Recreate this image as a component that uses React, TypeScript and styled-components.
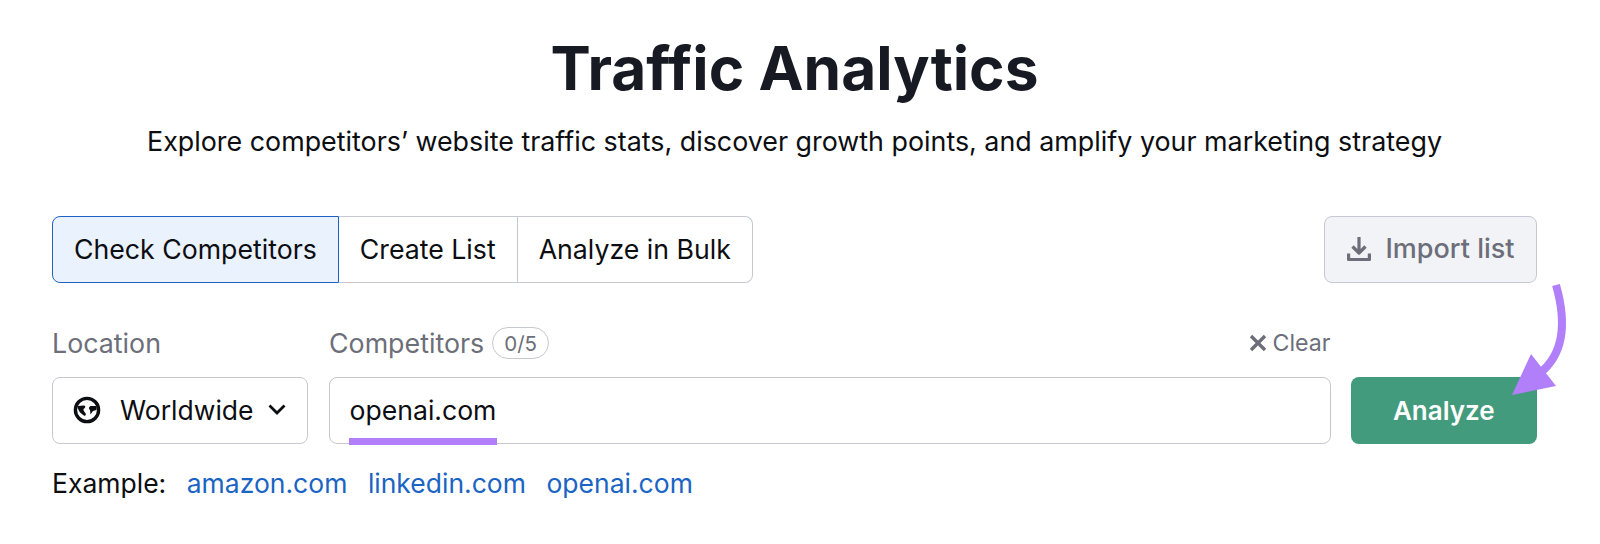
import styled, { createGlobalStyle } from "styled-components";

const GlobalStyle = createGlobalStyle`
  html, body {
    margin: 0;
    padding: 0;
    background: #fff;
  }
  body {
    font-family: Inter, "Liberation Sans", sans-serif;
  }
`;

const Page = styled.div`
  position: relative;
  width: 1600px;
  height: 544px;
  box-sizing: border-box;
  padding: 0 63px 0 52px;
  overflow: hidden;
  display: flex;
  flex-direction: column;
  align-items: center;
`;

const Title = styled.h1`
  margin: 32px 0 0;
  font-size: 60.4px;
  line-height: 72px;
  font-weight: 700;
  color: #171a22;
`;

const Subtitle = styled.p`
  margin: 20px 0 0;
  font-size: 26.85px;
  line-height: 34px;
  font-weight: 400;
  color: #0c0e12;
  white-space: nowrap;
`;

const Panel = styled.div`
  width: 100%;
  margin-top: 58px;
  display: flex;
  flex-direction: column;
`;

const TopRow = styled.div`
  display: flex;
  justify-content: space-between;
`;

const Tabs = styled.div`
  display: flex;
`;

const Tab = styled.div<{ $active?: boolean; $pos: "first" | "mid" | "last" }>`
  height: 67px;
  box-sizing: border-box;
  display: flex;
  align-items: center;
  padding: 0 21px 2px;
  font-size: 26.7px;
  color: #0c0e12;
  border: 1.5px solid ${(p) => (p.$active ? "#1e63c4" : "#c6c8d2")};
  border-left-width: ${(p) => (p.$pos === "first" ? "1.5px" : "0")};
  background: ${(p) => (p.$active ? "#eaf2fe" : "#fff")};
  border-radius: ${(p) =>
    p.$pos === "first" ? "8px 0 0 8px" : p.$pos === "last" ? "0 8px 8px 0" : "0"};
`;

const ImportButton = styled.div`
  width: 213.5px;
  height: 67px;
  box-sizing: border-box;
  padding: 0 0 2px 22px;
  display: flex;
  align-items: center;
  gap: 15px;
  border: 1.5px solid #c6c8d2;
  border-radius: 8px;
  background: #f2f3f6;
  color: #6c6e79;
  font-size: 27px;
  font-weight: 500;
`;

const FieldsRow = styled.div`
  margin-top: 43px;
  display: flex;
  align-items: flex-end;
`;

const Field = styled.div<{ $grow?: boolean }>`
  display: flex;
  flex-direction: column;
  gap: 18px;
  ${(p) => (p.$grow ? "flex: 1; margin-right: 20px;" : "width: 256px; margin-right: 21px;")}
`;

const LabelRow = styled.div`
  height: 33px;
  display: flex;
  align-items: center;
  gap: 8px;
  color: #6c6e79;
  font-size: 26.8px;
`;

const Counter = styled.span`
  height: 32px;
  margin-top: 1px;
  box-sizing: border-box;
  padding: 0 11px;
  display: flex;
  align-items: center;
  border: 1.5px solid #c6c8d2;
  border-radius: 17px;
  font-size: 20.5px;
`;

const ClearLink = styled.span`
  margin-left: auto;
  display: flex;
  align-items: center;
  gap: 5px;
  font-size: 23.2px;
`;

const Select = styled.div`
  height: 67px;
  box-sizing: border-box;
  padding: 0 20px 2px;
  display: flex;
  align-items: center;
  border: 1.5px solid #c6c8d2;
  border-radius: 8px;
  font-size: 26.5px;
  color: #0c0e12;
`;

const SelectText = styled.span`
  margin-left: 19px;
  margin-right: 15px;
`;

const Input = styled.div`
  position: relative;
  height: 67px;
  box-sizing: border-box;
  padding: 0 19.5px 2px;
  display: flex;
  align-items: center;
  border: 1.5px solid #c6c8d2;
  border-radius: 8px;
  font-size: 26.6px;
  color: #0c0e12;
`;

const Underline = styled.span`
  position: absolute;
  left: 18.5px;
  top: 59.5px;
  width: 148px;
  height: 7.5px;
  background: #b17ffa;
`;

const AnalyzeButton = styled.div`
  width: 186.5px;
  height: 67px;
  flex-shrink: 0;
  border-radius: 8px;
  background: #439b7e;
  color: #fff;
  font-size: 26px;
  font-weight: 600;
  display: flex;
  align-items: center;
  justify-content: center;
  padding-bottom: 1px;
  box-sizing: border-box;
`;

const Examples = styled.div`
  margin-top: 21px;
  display: flex;
  gap: 20.5px;
  font-size: 26.5px;
  line-height: 36px;
  color: #0c0e12;
`;

const ExampleLink = styled.a`
  color: #1a64c4;
  text-decoration: none;
`;

const Arrow = styled.svg`
  position: absolute;
  left: 1490px;
  top: 275px;
`;

export default function App() {
  return (
    <Page>
      <GlobalStyle />
      <Title>Traffic Analytics</Title>
      <Subtitle>
        Explore competitors’ website traffic stats, discover growth points, and amplify your marketing strategy
      </Subtitle>
      <Panel>
        <TopRow>
          <Tabs>
            <Tab $active $pos="first">Check Competitors</Tab>
            <Tab $pos="mid">Create List</Tab>
            <Tab $pos="last">Analyze in Bulk</Tab>
          </Tabs>
          <ImportButton>
            <svg width="24" height="24" viewBox="0 0 24 24" fill="none">
              <path d="M12 0v15M5.5 9.5l6.5 6.5 6.5-6.5" stroke="#6c6e79" strokeWidth="3.2" strokeLinejoin="round" />
              <path d="M1.6 16.5v6h20.8v-6" stroke="#6c6e79" strokeWidth="3.2" strokeLinejoin="round" />
            </svg>
            Import list
          </ImportButton>
        </TopRow>
        <FieldsRow>
          <Field>
            <LabelRow>Location</LabelRow>
            <Select>
              <svg width="28" height="28" viewBox="0 0 28 28" fill="none">
                <circle cx="14" cy="14" r="11.6" stroke="#0c0e12" strokeWidth="3.4" />
                <path d="M4.5 10L11 9.5C13 10 12.5 12 10.5 13C10 15 12 16 13 18L12 20C8 18 5 15 4.5 10Z" fill="#0c0e12" />
                <path d="M23.5 10L17.5 10C15.5 11 15.5 13 17 14L17.5 18.5L20 15L23.5 14Z" fill="#0c0e12" />
              </svg>
              <SelectText>Worldwide</SelectText>
              <svg width="18" height="11" viewBox="0 0 18 11" fill="none">
                <path d="M1.5 1.5L9 9l7.5-7.5" stroke="#0c0e12" strokeWidth="2.8" />
              </svg>
            </Select>
          </Field>
          <Field $grow>
            <LabelRow>
              Competitors
              <Counter>0/5</Counter>
              <ClearLink>
                <svg width="18" height="18" viewBox="0 0 18 18" fill="none">
                  <path d="M2 2l14 14M16 2L2 16" stroke="#6c6e79" strokeWidth="3.4" />
                </svg>
                Clear
              </ClearLink>
            </LabelRow>
            <Input>
              openai.com
              <Underline />
            </Input>
          </Field>
          <AnalyzeButton>Analyze</AnalyzeButton>
        </FieldsRow>
        <Examples>
          <span>Example:</span>
          <ExampleLink>amazon.com</ExampleLink>
          <ExampleLink>linkedin.com</ExampleLink>
          <ExampleLink>openai.com</ExampleLink>
        </Examples>
      </Panel>
      <Arrow width="110" height="130" viewBox="0 0 110 130" fill="none">
        <path d="M66 10C76 45 75 78 50 98" stroke="#b17ffa" strokeWidth="8" />
        <path d="M41 79L66 111L22 120Z" fill="#b17ffa" />
      </Arrow>
    </Page>
  );
}
